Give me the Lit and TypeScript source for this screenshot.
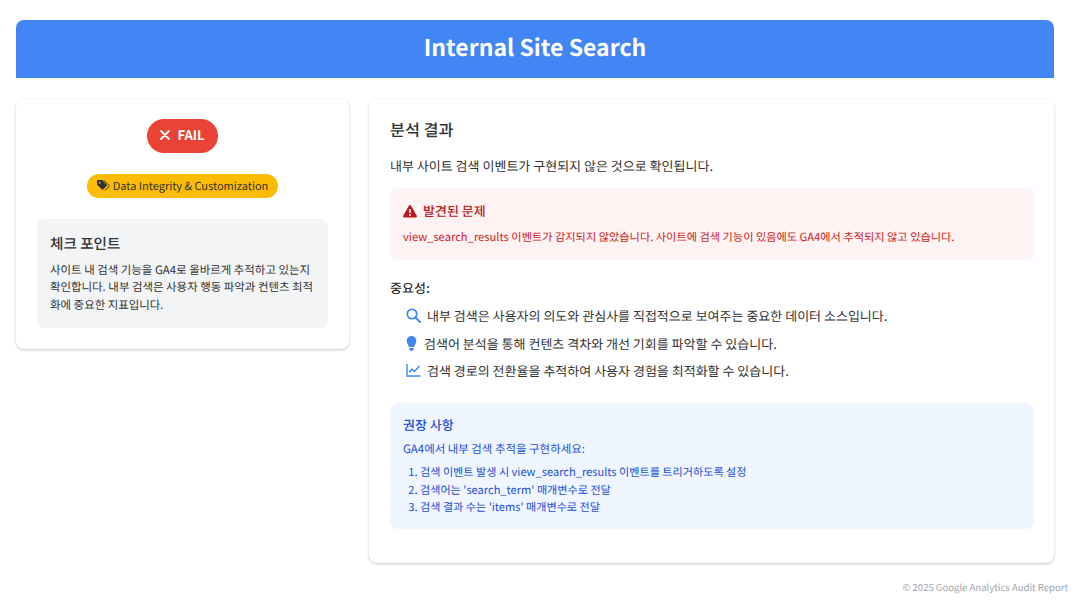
import { LitElement, html, css } from "lit";
import { customElement } from "lit/decorators.js";

@customElement("app-root")
export class AppRoot extends LitElement {
  static styles = css`
    :host { display: block; height: 600px; position: relative; overflow: hidden; background: #fff; color: #333;
      font-family: "Noto Sans CJK KR", "Noto Sans", sans-serif; font-size: 13px; text-rendering: geometricPrecision; }
    * { box-sizing: border-box; }
    .page { padding: 20px 21px 0 16px; }
    header { height: 58px; background: #4285f4; border-radius: 8px 8px 0 0; color: #fff; display: flex; align-items: center; justify-content: center; padding-bottom: 6px; }
    h1 { margin: 0; font-size: 23px; font-weight: 700; line-height: 1; }
    .cols { display: flex; gap: 20px; margin-top: 21px; align-items: flex-start; }
    .card { background: #fff; border-radius: 8px; box-shadow: 0 1px 3px rgba(0,0,0,.18), 0 1px 2px rgba(0,0,0,.06); }
    .left { width: 333px; height: 250px; padding: 20px 21px; display: flex; flex-direction: column; align-items: center; }
    .right { width: 685px; height: 464px; padding: 19px 20px 19px 21px; }
    .fail { width: 71px; height: 34px; border-radius: 17px; background: #ea4335; color: #fff; font-weight: 700; font-size: 13px; display: flex; align-items: center; justify-content: center; gap: 7px; padding-bottom: 3px; }
    .cat { margin-top: 21px; width: 191px; height: 24px; border-radius: 12px; background: #fbbc05; color: #333; font-size: 11px; display: flex; align-items: center; justify-content: center; gap: 3px; padding-bottom: 1px; }
    .check { margin-top: 21px; width: 291px; height: 109px; background: #f3f4f6; border-radius: 8px; padding: 14px 13px 13px; }
    .check h3 { margin: 0 0 7px; font-size: 14.6px; line-height: 22px; font-weight: 500; color: #333; }
    .check p { margin: 0; font-size: 11.45px; line-height: 17.4px; color: #333; }
    h2 { margin: 0; font-size: 16.25px; line-height: 22px; font-weight: 500; color: #333; }
    .lead { margin: 16px 0 0; font-size: 13px; line-height: 20px; }
    .alert { margin-top: 12px; height: 72px; padding: 13px 13px; background: #fef2f2; border-radius: 8px; color: #b91c1c; }
    .alert .t { display: flex; align-items: center; gap: 6px; font-size: 13px; font-weight: 500; line-height: 20px; }
    .alert p { margin: 7px 0 0; font-size: 11.2px; line-height: 18px; color: #c81e1e; }
    .why { margin-top: 18px; font-size: 13px; font-weight: 500; line-height: 20px; }
    ul { list-style: none; margin: 4px 0 0; padding: 0 0 0 16px; }
    li { display: flex; align-items: center; height: 27.5px; font-size: 13px; gap: 6px; }
    li svg { flex: none; }
    li.tight { gap: 7px; }
    .rec { margin-top: 18.5px; height: 126px; padding: 12px 13px; background: #eff6ff; border-radius: 8px; color: #1d4ed8; }
    .rec .t { font-size: 13px; font-weight: 500; line-height: 20px; color: #1d4ed8; }
    .rec p { margin: 5px 0 0; font-size: 11.45px; line-height: 18px; }
    ol { margin: 6px 0 0; padding: 0 0 0 17px; font-size: 11.1px; line-height: 17.5px; }
    ol li { display: list-item; height: auto; font-size: inherit; }
    footer { position: absolute; right: 7px; bottom: 6px; font-size: 9.55px; line-height: 14px; color: #9ca3af; }
  `;

  render() {
    return html`
      <div class="page">
        <header><h1>Internal Site Search</h1></header>
        <div class="cols">
          <section class="card left">
            <div class="fail">
              <svg width="10" height="10" viewBox="0 0 10 10"><path d="M1 1 9 9M9 1 1 9" stroke="#fff" stroke-width="1.8" stroke-linecap="round"/></svg>
              <span>FAIL</span>
            </div>
            <div class="cat">
              <svg width="13" height="11" viewBox="0 0 13 11"><path fill="#333" d="M0 1.2C0 .5.5 0 1.2 0h3.4c.4 0 .7.1 1 .4l4 4c.5.5.5 1.200 0 1.700L6.400 9.300c-.5.5-1.200.5-1.700 0l-4.300-4.300C.1 4.700 0 4.400 0 4Z"/><path fill="none" stroke="#333" stroke-width="1" stroke-linecap="round" d="M7 .5l4.800 4.800c.4.400.4 1 0 1.400L8.500 10"/><circle cx="2.700" cy="2.700" r=".9" fill="#fbbc05"/></svg>
              <span>Data Integrity &amp; Customization</span>
            </div>
            <div class="check">
              <h3>체크 포인트</h3>
              <p>사이트 내 검색 기능을 GA4로 올바르게 추적하고 있는지 확인합니다. 내부 검색은 사용자 행동 파악과 컨텐츠 최적화에 중요한 지표입니다.</p>
            </div>
          </section>
          <section class="card right">
            <h2>분석 결과</h2>
            <p class="lead">내부 사이트 검색 이벤트가 구현되지 않은 것으로 확인됩니다.</p>
            <div class="alert">
              <div class="t">
                <svg width="14" height="13" viewBox="0 0 14 13"><path fill="#b91c1c" fill-rule="evenodd" d="M7 0c.4 0 .8.2 1 .6l5.800 10.100c.4.700-.1 1.800-1 1.800H1.200c-.9 0-1.400-1.100-1-1.800L6 .6C6.200.2 6.600 0 7 0ZM6.200 4v4h1.600V4ZM7 8.900a1 1 0 1 0 0 2 1 1 0 0 0 0-2Z"/></svg>
                <span>발견된 문제</span>
              </div>
              <p>view_search_results 이벤트가 감지되지 않았습니다. 사이트에 검색 기능이 있음에도 GA4에서 추적되지 않고 있습니다.</p>
            </div>
            <div class="why">중요성:</div>
            <ul>
              <li>
                <svg width="15" height="15" viewBox="0 0 15 15"><circle cx="6" cy="6" r="4.700" fill="none" stroke="#4285f4" stroke-width="1.800"/><path d="M9.500 9.500 14 14" stroke="#4285f4" stroke-width="2" stroke-linecap="round"/></svg>
                <span>내부 검색은 사용자의 의도와 관심사를 직접적으로 보여주는 중요한 데이터 소스입니다.</span>
              </li>
              <li class="tight">
                <svg width="11" height="15" viewBox="0 0 11 15"><path fill="#4285f4" d="M5.500 0C2.700 0 .7 2.300.7 5.100c0 2.500 1.700 3.500 2.100 5.900h5.400c.4-2.400 2.100-3.400 2.100-5.900C10.300 2.300 8.300 0 5.500 0ZM3.200 12h4.600v.8c0 1-1 2.200-2.300 2.200s-2.300-1.200-2.300-2.200Z"/></svg>
                <span>검색어 분석을 통해 컨텐츠 격차와 개선 기회를 파악할 수 있습니다.</span>
              </li>
              <li>
                <svg width="15" height="13" viewBox="0 0 15 13"><path d="M1 0v12h13.500" fill="none" stroke="#4285f4" stroke-width="1.400"/><path d="M3.200 8.500 6 5l2.500 2.500L13.500 2" fill="none" stroke="#4285f4" stroke-width="1.500"/></svg>
                <span>검색 경로의 전환율을 추적하여 사용자 경험을 최적화할 수 있습니다.</span>
              </li>
            </ul>
            <div class="rec">
              <div class="t">권장 사항</div>
              <p>GA4에서 내부 검색 추적을 구현하세요:</p>
              <ol>
                <li>검색 이벤트 발생 시 view_search_results 이벤트를 트리거하도록 설정</li>
                <li>검색어는 'search_term' 매개변수로 전달</li>
                <li>검색 결과 수는 'items' 매개변수로 전달</li>
              </ol>
            </div>
          </section>
        </div>
      </div>
      <footer>© 2025 Google Analytics Audit Report</footer>
    `;
  }
}
